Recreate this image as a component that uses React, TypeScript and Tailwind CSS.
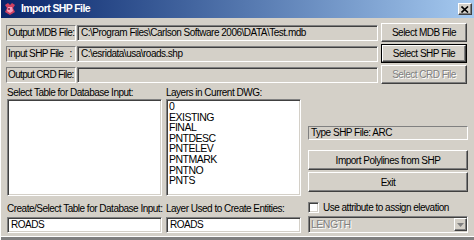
import React from 'react';

const sunken = 'border border-t-[#808080] border-l-[#808080] border-b-white border-r-white shadow-[inset_1px_1px_0_#404040,inset_-1px_-1px_0_#d4d0c8]';
const raised = 'border border-t-white border-l-white border-b-[#404040] border-r-[#404040] shadow-[inset_-1px_-1px_0_#808080]';
const disabledText = 'text-[#808080] [text-shadow:1px_1px_0_#ffffff]';

const layers = ['0', 'EXISTING', 'FINAL', 'PNTDESC', 'PNTELEV', 'PNTMARK', 'PNTNO', 'PNTS'];

const FileRow: React.FC<{ label: string; value: string; button: string; isDefault?: boolean; disabled?: boolean }> = ({
  label,
  value,
  button,
  isDefault,
  disabled,
}) => (
  <div className="flex items-center h-[19px]">
    <div className="w-[70px] h-[16px] border border-t-[#808080] border-l-[#808080] border-b-white border-r-white pl-[1px] leading-[14px] whitespace-pre tracking-[-0.65px]">
      {label}
    </div>
    <div className={`ml-[1px] w-[301px] h-[16px] bg-[#d4d0c8] ${sunken} pl-[3px] leading-[13px] whitespace-nowrap overflow-hidden`}>{value}</div>
    <div className="ml-[3px] w-[86px] h-[19px]">
      {isDefault ? (
        <div className="h-full border border-black">
          <div className={`h-full ${raised} flex items-center justify-center`}>{button}</div>
        </div>
      ) : (
        <div className={`h-full ${raised} flex items-center justify-center ${disabled ? disabledText : ''}`}>{button}</div>
      )}
    </div>
  </div>
);

const App: React.FC = () => {
  return (
    <div className="w-[474px] h-[240px] bg-[#d4d0c8] flex flex-col overflow-hidden text-[10px] tracking-[-0.5px] text-black font-['Liberation_Sans',Arial,sans-serif] border-l border-white">
      {/* Title bar */}
      <div className="h-[18px] shrink-0 flex items-center bg-gradient-to-r from-[#0a246a] to-[#a6caf0]">
        <svg width="14" height="14" viewBox="0 0 14 14" className="ml-[2px]">
          <path d="M2 3 L5 1 L7 3 L9 1 L12 3 L10 6 L12 10 L7 13 L2 10 L4 6 Z" fill="#d04060" />
          <path d="M5 5 L9 5 L10 9 L7 11 L4 9 Z" fill="#f4a0c0" />
          <circle cx="6" cy="7" r="1" fill="#802040" />
        </svg>
        <span className="ml-[4px] text-white font-bold text-[10.5px] tracking-[-0.6px]">Import SHP File</span>
        <div className={`ml-auto mr-[2px] w-[14px] h-[12px] bg-[#d4d0c8] ${raised} flex items-center justify-center`}>
          <svg width="8" height="7" viewBox="0 0 8 7">
            <path d="M0.5 0.5 L7 6.5 M7 0.5 L0.5 6.5" stroke="black" strokeWidth="1.6" />
          </svg>
        </div>
      </div>

      {/* File rows */}
      <div className="pl-[5px] mt-[5px] flex flex-col gap-[2px]">
        <FileRow label="Output MDB File:" value="C:\Program Files\Carlson Software 2006\DATA\Test.mdb" button="Select MDB File" />
        <FileRow label={'Input SHP File   :'} value="C:\esridata\usa\roads.shp" button="Select SHP File" isDefault />
        <FileRow label="Output CRD File:" value="" button="Select CRD File" disabled />
      </div>

      {/* Middle section */}
      <div className="pl-[6px] mt-[2px] flex">
        <div className="w-[155px] flex flex-col">
          <div className="h-[13px] leading-[13px] whitespace-nowrap">Select Table for Database Input:</div>
          <div className={`h-[97px] bg-white ${sunken}`} />
        </div>
        <div className="ml-[4px] w-[135px] flex flex-col">
          <div className="h-[13px] leading-[13px] whitespace-nowrap">Layers in Current DWG:</div>
          <div className={`h-[97px] bg-white ${sunken} pl-[2px] pt-[1px] leading-[10.6px] text-[10.5px]`}>
            {layers.map((l) => (
              <div key={l}>{l}</div>
            ))}
          </div>
        </div>
        <div className="ml-[7px] w-[160px] flex flex-col pt-[40px]">
          <div className="h-[14px] border border-t-[#808080] border-l-[#808080] border-b-white border-r-white pl-[2px] leading-[12px]">
            Type SHP File: ARC
          </div>
          <div className={`mt-[10px] h-[20px] ${raised} flex items-center justify-center`}>Import Polylines from SHP</div>
          <div className={`mt-[2px] h-[20px] ${raised} flex items-center justify-center`}>Exit</div>
        </div>
      </div>

      {/* Bottom section */}
      <div className="pl-[6px] flex">
        <div className="w-[155px] flex flex-col">
          <div className="mt-[6px] h-[13px] leading-[13px] whitespace-nowrap">Create/Select Table for Database Input:</div>
          <div className={`mt-[2px] h-[16px] bg-white ${sunken} pl-[3px] leading-[13px]`}>ROADS</div>
        </div>
        <div className="ml-[4px] w-[135px] flex flex-col">
          <div className="mt-[6px] h-[13px] leading-[13px] whitespace-nowrap">Layer Used to Create Entities:</div>
          <div className={`mt-[2px] h-[16px] bg-white ${sunken} pl-[3px] leading-[13px]`}>ROADS</div>
        </div>
        <div className="ml-[7px] w-[160px] flex flex-col">
          <div className="mt-[6px] h-[11px] flex items-center">
            <div className={`w-[11px] h-[11px] shrink-0 bg-white ${sunken}`} />
            <span className="ml-[4px] leading-[11px] whitespace-nowrap">Use attribute to assign elevation</span>
          </div>
          <div className={`mt-[3px] h-[17px] bg-[#d4d0c8] ${sunken} flex items-center`}>
            <span className={`pl-[2px] flex-1 text-[10.5px] ${disabledText}`}>LENGTH</span>
            <div className={`w-[13px] h-[13px] ${raised} flex items-center justify-center`}>
              <svg width="7" height="4" viewBox="0 0 7 4">
                <path d="M0 0 H7 L3.5 4 Z" fill="#808080" />
              </svg>
            </div>
          </div>
        </div>
      </div>

      <div className="mt-auto h-[4px] border-t border-white bg-[#808080]" />
    </div>
  );
};

export default App;
